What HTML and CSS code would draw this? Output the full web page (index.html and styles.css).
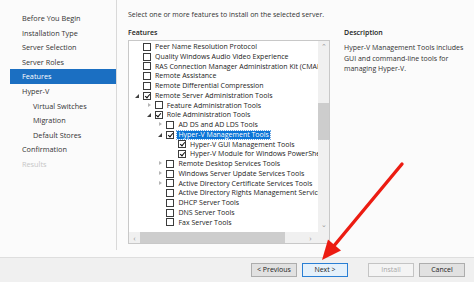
FILE: index.html
```html
<!DOCTYPE html>
<html lang="en">
<head>
    <meta charset="UTF-8">
    <title>Add Roles and Features Wizard</title>
    <link rel="stylesheet" href="styles.css">
</head>
<body>

    <div class="wizard">
        <div class="main">
            <!-- left step list -->
            <ul class="steps">
                <li>Before You Begin</li>
                <li>Installation Type</li>
                <li>Server Selection</li>
                <li>Server Roles</li>
                <li class="active">Features</li>
                <li>Hyper-V</li>
                <li class="sub">Virtual Switches</li>
                <li class="sub">Migration</li>
                <li class="sub">Default Stores</li>
                <li>Confirmation</li>
                <li class="disabled">Results</li>
            </ul>

            <div class="content">
                <p class="intro">Select one or more features to install on the selected server.</p>
                <div class="columns">
                    <div class="features">
                        <h3>Features</h3>
                        <div class="listbox">
                            <ul class="tree">
                                <li class="lvl0"><span class="exp"></span><span class="cb"></span>Peer Name Resolution Protocol</li>
                                <li class="lvl0"><span class="exp"></span><span class="cb"></span>Quality Windows Audio Video Experience</li>
                                <li class="lvl0"><span class="exp"></span><span class="cb"></span>RAS Connection Manager Administration Kit (CMAK)</li>
                                <li class="lvl0"><span class="exp"></span><span class="cb"></span>Remote Assistance</li>
                                <li class="lvl0"><span class="exp"></span><span class="cb"></span>Remote Differential Compression</li>
                                <li class="lvl0"><span class="exp open"></span><span class="cb on"></span>Remote Server Administration Tools</li>
                                <li class="lvl1"><span class="exp closed"></span><span class="cb"></span>Feature Administration Tools</li>
                                <li class="lvl1"><span class="exp open"></span><span class="cb on"></span>Role Administration Tools</li>
                                <li class="lvl2"><span class="exp closed"></span><span class="cb"></span>AD DS and AD LDS Tools</li>
                                <li class="lvl2"><span class="exp open"></span><span class="cb on"></span><span class="sel">Hyper-V Management Tools</span></li>
                                <li class="lvl3"><span class="exp"></span><span class="cb on"></span>Hyper-V GUI Management Tools</li>
                                <li class="lvl3"><span class="exp"></span><span class="cb on"></span>Hyper-V Module for Windows PowerShell</li>
                                <li class="lvl2"><span class="exp closed"></span><span class="cb"></span>Remote Desktop Services Tools</li>
                                <li class="lvl2"><span class="exp closed"></span><span class="cb"></span>Windows Server Update Services Tools</li>
                                <li class="lvl2"><span class="exp closed"></span><span class="cb"></span>Active Directory Certificate Services Tools</li>
                                <li class="lvl2"><span class="exp"></span><span class="cb"></span>Active Directory Rights Management Services Tools</li>
                                <li class="lvl2"><span class="exp"></span><span class="cb"></span>DHCP Server Tools</li>
                                <li class="lvl2"><span class="exp"></span><span class="cb"></span>DNS Server Tools</li>
                                <li class="lvl2"><span class="exp"></span><span class="cb"></span>Fax Server Tools</li>
                            </ul>
                            <div class="vscroll">
                                <span class="arrow">&#8963;</span>
                                <div class="vthumb"></div>
                                <span class="arrow down">&#8964;</span>
                            </div>
                            <div class="hscroll">
                                <span class="harrow">&lsaquo;</span>
                                <div class="hthumb"></div>
                                <span class="harrow">&rsaquo;</span>
                            </div>
                            <div class="corner"></div>
                        </div>
                    </div>
                    <div class="description">
                        <h3>Description</h3>
                        <p>Hyper-V Management Tools includes GUI and command-line tools for managing Hyper-V.</p>
                    </div>
                </div>
            </div>
        </div>

        <div class="footer">
            <button class="btn">&lt; Previous</button>
            <button class="btn default">Next &gt;</button>
            <button class="btn off install">Install</button>
            <button class="btn">Cancel</button>
        </div>

        <!-- red pointer drawn over the dialog -->
        <svg class="pointer" width="474" height="282" viewBox="0 0 474 282">
            <line x1="402" y1="164" x2="333" y2="247" stroke="#ec1c12" stroke-width="3.4" stroke-linecap="round"/>
            <polygon points="322,260 341,250.5 328,239.5" fill="#ec1c12"/>
        </svg>
    </div>

</body>
</html>
```

FILE: styles.css
```css
* {
    box-sizing: border-box;
}
body {
    margin: 0;
    font-family: "Open Sans", "Liberation Sans", sans-serif;
    font-size: 7px;
    color: #1e1e1e;
    background: #fbfbfb;
}
.wizard {
    width: 474px;
    height: 282px;
    display: flex;
    flex-direction: column;
    position: relative;
    overflow: hidden;
}
.main {
    display: flex;
    height: 257px;
}
.steps {
    list-style: none;
    margin: 0 0 7px 0;
    padding: 11px 0 0 10px;
    width: 117px;
    border-right: 1px solid #d9d9d9;
    font-size: 7.3px;
    color: #333;
}
.steps li {
    height: 14.6px;
    line-height: 14.6px;
    padding-left: 12px;
    white-space: nowrap;
}
.steps li.sub {
    padding-left: 23px;
}
.steps li.active {
    background: #1b6fc2;
    color: #fff;
}
.steps li.disabled {
    color: #c6c6c6;
}
.content {
    flex: 1;
    padding: 9px 0 0 11px;
}
.intro {
    margin: 0;
    line-height: 12px;
    color: #333;
    white-space: nowrap;
}
.columns {
    display: flex;
    margin-top: 6px;
}
h3 {
    margin: 0;
    font-size: 7px;
    font-weight: 600;
    line-height: 12px;
    color: #222;
}
.features {
    width: 202px;
}
.listbox {
    margin-top: 1px;
    width: 202px;
    height: 204px;
    background: #fff;
    border: 1px solid #c8c8c8;
    display: grid;
    grid-template-columns: 1fr 11px;
    grid-template-rows: 1fr 11px;
    overflow: hidden;
}
.tree {
    list-style: none;
    margin: 0;
    padding: 1px 0 0 4px;
    overflow: hidden;
}
.tree li {
    height: 9.75px;
    line-height: 9.75px;
    display: flex;
    align-items: center;
    white-space: nowrap;
    color: #222;
}
.tree li.lvl1 { padding-left: 11.7px; }
.tree li.lvl2 { padding-left: 23.4px; }
.tree li.lvl3 { padding-left: 35.1px; }
.exp {
    width: 10px;
    height: 8px;
    flex: none;
    position: relative;
}
.exp.open::after {
    content: "";
    position: absolute;
    left: 2px;
    top: 2px;
    border-style: solid;
    border-width: 0 0 4px 4px;
    border-color: transparent transparent #404040 transparent;
}
.exp.closed::after {
    content: "";
    position: absolute;
    left: 3px;
    top: 1.5px;
    border-style: solid;
    border-width: 2.5px 0 2.5px 3px;
    border-color: transparent transparent transparent #b5b5b5;
}
.cb {
    width: 8px;
    height: 8px;
    flex: none;
    border: 1px solid #3c3c3c;
    background: #fff;
    margin-right: 4px;
    position: relative;
}
.cb.on::after {
    content: "";
    position: absolute;
    left: 1.6px;
    top: 0;
    width: 2px;
    height: 4px;
    border: solid #111;
    border-width: 0 1.2px 1.2px 0;
    transform: rotate(40deg);
}
.sel {
    background: #0a74d6;
    color: #fff;
    padding: 0 1px;
    margin-left: -1px;
    line-height: 8px;
    outline: 1px dotted #6aa7e3;
}
.vscroll {
    background: #f0f0f0;
    display: flex;
    flex-direction: column;
    align-items: center;
    color: #999;
}
.arrow {
    height: 10px;
    line-height: 12px;
    font-size: 7px;
}
.arrow.down {
    margin-top: auto;
    line-height: 6px;
}
.vthumb {
    margin-top: 52px;
    width: 11px;
    height: 37px;
    background: #cdcdcd;
}
.hscroll {
    background: #f0f0f0;
    display: flex;
    align-items: center;
    color: #999;
    font-size: 8px;
}
.harrow {
    width: 11px;
    text-align: center;
    line-height: 11px;
}
.hthumb {
    width: 145px;
    height: 11px;
    background: #cdcdcd;
    margin-right: auto;
}
.hscroll .harrow:last-child {
    margin-right: 2px;
}
.corner {
    background: #f0f0f0;
}
.description {
    padding-left: 14px;
}
.description p {
    margin: 4px 0 0 0;
    width: 124px;
    line-height: 10.5px;
    color: #333;
}
.footer {
    flex: 1;
    background: #f0f0f0;
    border-top: 1px solid #dedede;
    display: flex;
    align-items: center;
    justify-content: flex-end;
    padding: 0 9px 1px 0;
}
.btn {
    font-family: inherit;
    font-size: 7px;
    width: 46px;
    height: 14px;
    padding: 0;
    margin-left: 5px;
    background: #e1e1e1;
    border: 1px solid #adadad;
    color: #222;
}
.btn.default {
    border-color: #2a7fd4;
    background: #e5f1fb;
}
.btn.install {
    margin-left: 20px;
}
.btn.off {
    background: #f4f4f4;
    border-color: #c4c4c4;
    color: #a8a8a8;
}
.pointer {
    position: absolute;
    left: 0;
    top: 0;
}
```
